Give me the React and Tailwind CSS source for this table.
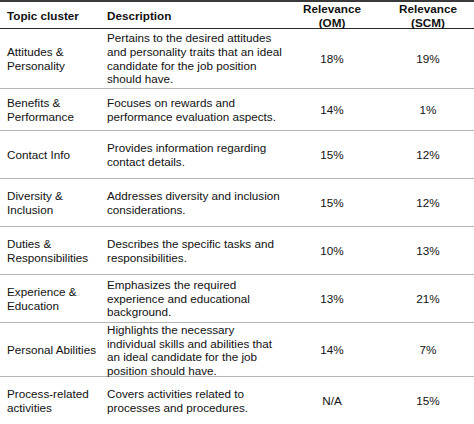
import React from 'react';

const rows = [
  { topic: ['Attitudes &', 'Personality'], desc: ['Pertains to the desired attitudes', 'and personality traits that an ideal', 'candidate for the job position', 'should have.'], om: '18%', scm: '19%', h: 'h-[60px]' },
  { topic: ['Benefits &', 'Performance'], desc: ['Focuses on rewards and', 'performance evaluation aspects.'], om: '14%', scm: '1%', h: 'h-[42px]' },
  { topic: ['Contact Info'], desc: ['Provides information regarding', 'contact details.'], om: '15%', scm: '12%', h: 'h-[48px]' },
  { topic: ['Diversity &', 'Inclusion'], desc: ['Addresses diversity and inclusion', 'considerations.'], om: '15%', scm: '12%', h: 'h-[48px]' },
  { topic: ['Duties &', 'Responsibilities'], desc: ['Describes the specific tasks and', 'responsibilities.'], om: '10%', scm: '13%', h: 'h-[48px]' },
  { topic: ['Experience &', 'Education'], desc: ['Emphasizes the required', 'experience and educational', 'background.'], om: '13%', scm: '21%', h: 'h-[48px]' },
  { topic: ['Personal Abilities'], desc: ['Highlights the necessary', 'individual skills and abilities that', 'an ideal candidate for the job', 'position should have.'], om: '14%', scm: '7%', h: 'h-[54px]' },
  { topic: ['Process-related', 'activities'], desc: ['Covers activities related to', 'processes and procedures.'], om: 'N/A', scm: '15%', h: 'h-[48px]', last: true },
];

const Lines = ({ lines }) => (
  <div>
    {lines.map((l, i) => (
      <div key={i} className="whitespace-nowrap">{l}</div>
    ))}
  </div>
);

export default function App() {
  return (
    <div className="w-[474px] h-[424px] bg-white text-[#111] text-[11.7px] leading-[13.6px] font-['Liberation_Sans',Arial,sans-serif] border-t-2 border-[#3a3a3a] overflow-hidden">
      <div className="grid grid-cols-[100px_182px_100px_92px] h-[27px] border-b border-[#2a2a2a] font-bold">
        <div className="flex items-center pl-[7px]">Topic cluster</div>
        <div className="flex items-center pl-[7px]">Description</div>
        <div className="flex items-center justify-center text-center">
          <Lines lines={['Relevance', '(OM)']} />
        </div>
        <div className="flex items-center justify-center text-center">
          <Lines lines={['Relevance', '(SCM)']} />
        </div>
      </div>
      {rows.map((r, i) => (
        <div
          key={i}
          className={`grid grid-cols-[100px_182px_100px_92px] ${r.h} ${r.last ? '' : 'border-b border-[#b4b4b4]'}`}
        >
          <div className="flex items-center pl-[7px]">
            <Lines lines={r.topic} />
          </div>
          <div className="flex items-center pl-[7px]">
            <Lines lines={r.desc} />
          </div>
          <div className="flex items-center justify-center">{r.om}</div>
          <div className="flex items-center justify-center">{r.scm}</div>
        </div>
      ))}
    </div>
  );
}
